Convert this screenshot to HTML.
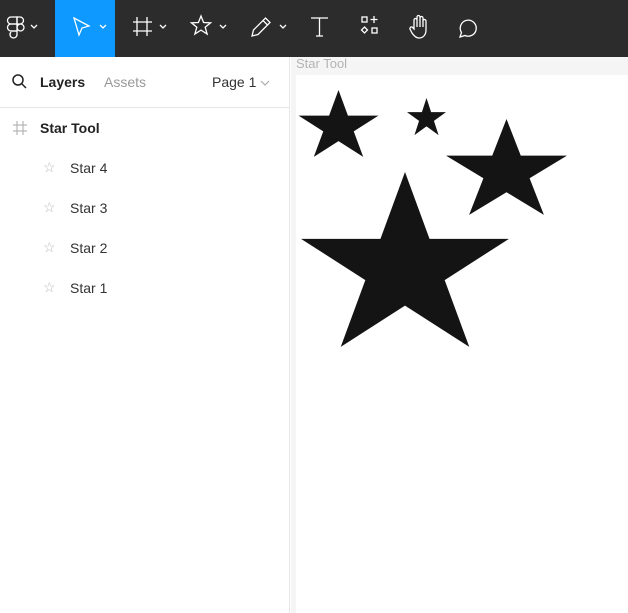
<!DOCTYPE html>
<html><head><meta charset="utf-8"><style>
*{margin:0;padding:0;box-sizing:border-box}
body{width:628px;height:613px;overflow:hidden;background:#fff;font-family:"Liberation Sans",sans-serif;position:relative}
.tb{position:absolute;left:0;top:0;width:628px;height:57px;background:#2c2c2c}
.sel{position:absolute;left:55px;top:0;width:60px;height:57px;background:#0d99ff}
svg.ic{position:absolute}
.panel{position:absolute;left:0;top:57px;width:290px;height:556px;background:#fff;border-right:1px solid #e6e6e6}
.canvas{position:absolute;left:291px;top:57px;width:337px;height:556px;background:#f5f5f5}
.frame{position:absolute;left:296px;top:75px;width:332px;height:538px;background:#fff}
.t{position:absolute;font-size:14px;color:#333;white-space:nowrap}
.sep{position:absolute;left:0;top:107px;width:290px;height:1px;background:#e6e6e6}
</style></head><body>
<div class="tb"></div>
<div class="sel"></div>
<svg class="ic" width="628" height="57" style="left:0;top:0" fill="none" stroke="#fff" stroke-width="1.3">
 <!-- figma logo -->
 <g transform="translate(8,17)">
  <path d="M3 0h6v7H3a3.5 3.5 0 0 1 0-7z"/><path d="M9 0h3a3.5 3.5 0 0 1 0 7H9z"/>
  <path d="M3 7h6v7H3a3.5 3.5 0 0 1 0-7z"/><circle cx="12.5" cy="10.5" r="3.5"/>
  <path d="M3 14h6v3.5a3.5 3.5 0 1 1-6-2.5"/>
 </g>
 <path d="M31 25l3 3 3-3"/>
 <!-- cursor -->
 <path d="M74 18l15 8-7 2-3 7z"/>
 <path d="M100 25l3 3 3-3"/>
 <!-- frame -->
 <path d="M137 17v19M147 17v19M133 22h19M133 31h19"/>
 <path d="M160 25l3 3 3-3"/>
 <!-- star -->
 <path d="M201 16l2.6 6.5 7 .3-5.4 4.4 1.9 6.8-6.1-3.9-6.1 3.9 1.9-6.8-5.4-4.4 7-.3z"/>
 <path d="M220 25l3 3 3-3"/>
 <!-- pencil -->
 <path d="M252 36l1.5-6 12-12 4.5 4.5-12 12z M263 20.5l4.5 4.5"/>
 <path d="M280 25l3 3 3-3"/>
 <!-- T -->
 <path d="M311 18h17M319.5 18v18M316 36h7"/>
 <!-- components -->
 <rect x="362" y="17" width="5" height="5"/><path d="M374 16v7M370.5 19.5h7"/>
 <path d="M364.5 27l3 3-3 3-3-3z"/><rect x="372" y="28" width="5" height="5"/>
 <!-- hand -->
 <path d="M414 29v-9a1.5 1.5 0 0 1 3 0v7v-10a1.5 1.5 0 0 1 3 0v10v-9a1.5 1.5 0 0 1 3 0v9v-6a1.5 1.5 0 0 1 3 0v9c0 5-3 8-7 8-3 0-5-2-7-5l-2-4a1.5 1.5 0 0 1 3-1z"/>
 <!-- comment -->
 <path d="M460 37l1.5-4.5a8 8 0 1 1 3.5 3z"/>
</svg>
<div class="canvas"></div>
<div class="frame"></div>
<div class="t" style="left:296px;top:56px;font-size:13px;color:#b3b3b3">Star Tool</div>
<div class="panel"></div>
<div class="sep"></div>
<svg class="ic" width="20" height="20" style="left:10px;top:72px" fill="none" stroke="#222" stroke-width="1.5"><circle cx="8" cy="8" r="5"/><path d="M12 12l4 4"/></svg>
<div class="t" style="left:40px;top:74px;font-weight:bold;color:#222">Layers</div>
<div class="t" style="left:104px;top:74px;color:#999">Assets</div>
<div class="t" style="left:212px;top:74px;color:#333">Page 1</div>
<svg class="ic" width="12" height="12" style="left:259px;top:77px" fill="none" stroke="#aaa" stroke-width="1.2"><path d="M2 4l4 4 4-4"/></svg>
<svg class="ic" width="16" height="16" style="left:12px;top:120px" fill="none" stroke="#aaa" stroke-width="1"><path d="M5 1v14M11 1v14M1 5h14M1 11h14"/></svg>
<div class="t" style="left:40px;top:120px;font-weight:bold;color:#222">Star Tool</div>
<div class="t" style="left:43px;top:159px;color:#bbb;font-size:14px">☆</div><div class="t" style="left:70px;top:160px">Star 4</div>
<div class="t" style="left:43px;top:199px;color:#bbb;font-size:14px">☆</div><div class="t" style="left:70px;top:200px">Star 3</div>
<div class="t" style="left:43px;top:239px;color:#bbb;font-size:14px">☆</div><div class="t" style="left:70px;top:240px">Star 2</div>
<div class="t" style="left:43px;top:279px;color:#bbb;font-size:14px">☆</div><div class="t" style="left:70px;top:280px">Star 1</div>
<svg class="ic" width="628" height="613" style="left:0;top:0" fill="#141414">
 <defs><polygon id="s" points="0,-1 0.2245,-0.309 0.951,-0.309 0.363,0.118 0.588,0.809 0,0.382 -0.588,0.809 -0.363,0.118 -0.951,-0.309 -0.2245,-0.309"/></defs>
 <use href="#s" transform="translate(338.5,127) scale(42,37)"/>
 <use href="#s" transform="translate(426.5,118.5) scale(20.5,20.5)"/>
 <use href="#s" transform="translate(506.5,172) scale(63.6,53)"/>
 <use href="#s" transform="translate(405,268.7) scale(109.3,96.7)"/>
</svg>
</body></html>
